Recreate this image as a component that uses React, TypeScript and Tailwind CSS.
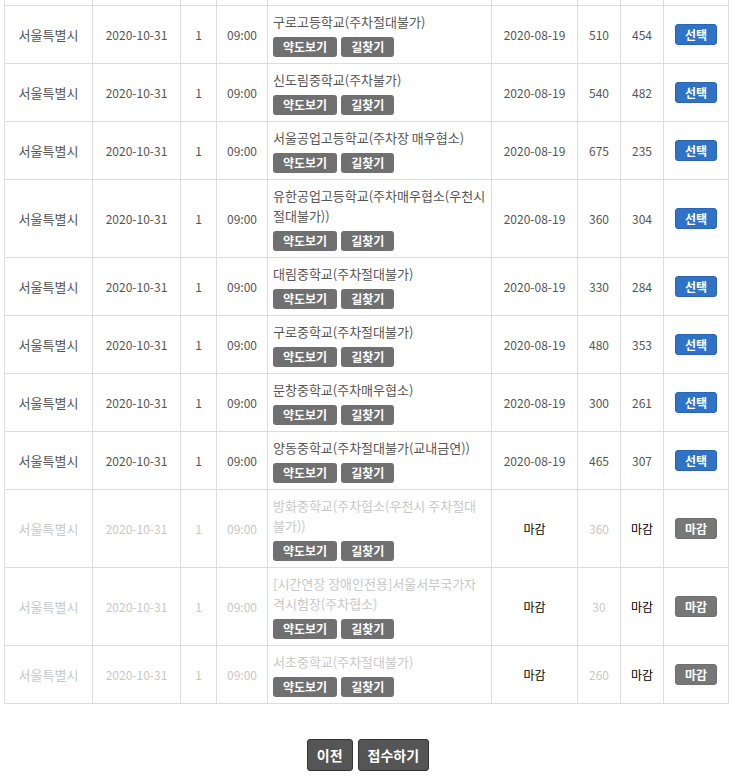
import React from "react";

type Row = { name: string[]; date: string; a: string; b: string; open: boolean };

const rows: Row[] = [
  { name: ["구로고등학교(주차절대불가)"], date: "2020-08-19", a: "510", b: "454", open: true },
  { name: ["신도림중학교(주차불가)"], date: "2020-08-19", a: "540", b: "482", open: true },
  { name: ["서울공업고등학교(주차장 매우협소)"], date: "2020-08-19", a: "675", b: "235", open: true },
  { name: ["유한공업고등학교(주차매우협소(우천시", "절대불가))"], date: "2020-08-19", a: "360", b: "304", open: true },
  { name: ["대림중학교(주차절대불가)"], date: "2020-08-19", a: "330", b: "284", open: true },
  { name: ["구로중학교(주차절대불가)"], date: "2020-08-19", a: "480", b: "353", open: true },
  { name: ["문창중학교(주차매우협소)"], date: "2020-08-19", a: "300", b: "261", open: true },
  { name: ["양동중학교(주차절대불가(교내금연))"], date: "2020-08-19", a: "465", b: "307", open: true },
  { name: ["방화중학교(주차협소(우천시 주차절대", "불가))"], date: "마감", a: "360", b: "마감", open: false },
  { name: ["[시간연장 장애인전용]서울서부국가자", "격시험장(주차협소)"], date: "마감", a: "30", b: "마감", open: false },
  { name: ["서초중학교(주차절대불가)"], date: "마감", a: "260", b: "마감", open: false },
];

const grid =
  "grid grid-cols-[88px_88px_36px_51px_224px_86px_43px_43px_65px]";
const cell =
  "border-r border-b border-[#dddddd] flex items-center justify-center text-center";

export default function App() {
  return (
    <div
      className="w-[736px] min-h-[778px] bg-white text-[12px] leading-[20px]"
      style={{ fontFamily: '"Noto Sans CJK KR", "Noto Sans", sans-serif' }}
    >
      <div className="ml-[4px] w-[725px] border-l border-[#dddddd]">
        <div className={grid}>
          {Array.from({ length: 9 }).map((_, i) => (
            <div key={i} className="h-[6px] border-r border-b border-[#dddddd]" />
          ))}
        </div>
        {rows.map((r, i) => {
          const txt = r.open ? "text-[#555555]" : "text-[#c8c8c8]";
          return (
            <div key={i} className={grid}>
              <div className={`${cell} ${txt} text-[13px]`}>서울특별시</div>
              <div className={`${cell} ${txt}`}>2020-10-31</div>
              <div className={`${cell} ${txt}`}>1</div>
              <div className={`${cell} ${txt}`}>09:00</div>
              <div className={`border-r border-b border-[#dddddd] pl-[5px] pt-[6px] pb-[6px] ${txt}`}>
                {r.name.map((l, j) => (
                  <div key={j} className="whitespace-nowrap h-[20px] text-[13px]">
                    {l}
                  </div>
                ))}
                <div className="flex gap-[4px] mt-[5px]">
                  <span className="h-[20px] px-[10px] rounded-[3px] bg-[#707070] text-white font-bold leading-[20px]">
                    약도보기
                  </span>
                  <span className="h-[20px] px-[10px] rounded-[3px] bg-[#707070] text-white font-bold leading-[20px]">
                    길찾기
                  </span>
                </div>
              </div>
              <div className={`${cell} ${r.open ? "text-[#555555]" : "text-black"}`}>{r.date}</div>
              <div className={`${cell} ${txt}`}>{r.a}</div>
              <div className={`${cell} ${r.open ? "text-[#555555]" : "text-black"}`}>{r.b}</div>
              <div className={cell}>
                {r.open ? (
                  <span className="w-[42px] h-[21px] rounded-[3px] border border-[#2b64b0] bg-[#3072c6] text-white font-bold leading-[19px]">
                    선택
                  </span>
                ) : (
                  <span className="w-[42px] h-[21px] rounded-[3px] border border-[#6e6e6e] bg-[#777777] text-white font-bold leading-[19px]">
                    마감
                  </span>
                )}
              </div>
            </div>
          );
        })}
      </div>
      <div className="flex justify-center gap-[5px] mt-[35px]">
        <span className="h-[32px] px-[9px] rounded-[3px] border border-[#333333] bg-[#555555] text-white font-bold text-[14px] leading-[30px]">
          이전
        </span>
        <span className="h-[32px] px-[9px] rounded-[3px] border border-[#333333] bg-[#555555] text-white font-bold text-[14px] leading-[30px]">
          접수하기
        </span>
      </div>
    </div>
  );
}
